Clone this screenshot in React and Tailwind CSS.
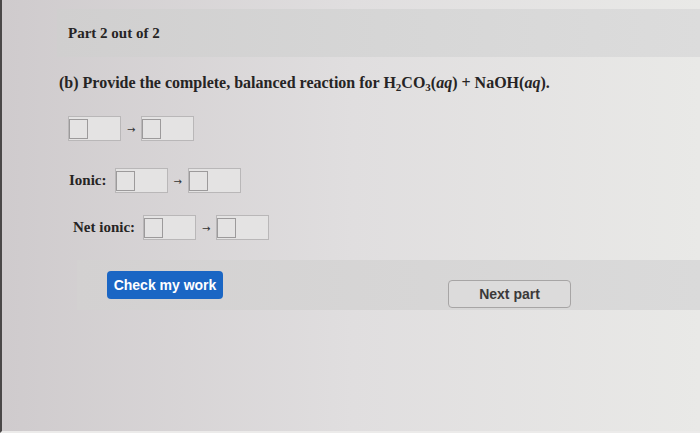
import React from "react";

const serif = { fontFamily: '"Liberation Serif", "Times New Roman", serif' };
const sans = { fontFamily: '"Liberation Sans", Arial, sans-serif' };
const arrowFont = { fontFamily: '"DejaVu Sans", sans-serif' };

function AnswerBox() {
  return (
    <div className="flex h-[25px] w-[53px] border border-[#b9b7b8] bg-[#e4e3e3]">
      <div className="mt-[2px] h-[20px] w-[19px] border border-[#9c9a9b]" />
    </div>
  );
}

function Reaction({ className = "" }) {
  return (
    <div className={"flex items-center " + className}>
      <AnswerBox />
      <span className="mx-[6px] mt-[3px] text-[10px] leading-none text-[#333]" style={arrowFont}>
        →
      </span>
      <AnswerBox />
    </div>
  );
}

export default function App() {
  return (
    <div
      className="flex h-[433px] w-[700px] flex-col overflow-hidden border-l-2 border-b-2 border-l-[#4a4848] border-b-[#ecebea] bg-gradient-to-r from-[#cfcbcd] via-[#e0dedf] to-[#e9e9e7] text-[#262424]"
      style={serif}
    >
      <div className="ml-[55px] mt-[9px] flex h-[48px] items-center bg-gradient-to-r from-[#d0cfcf] via-[#d6d6d6] to-[#dcdcdc] pl-[11px]">
        <span className="text-[15px] font-bold">Part 2 out of 2</span>
      </div>

      <p className="ml-[57px] mt-[18px] text-[16px] font-bold leading-none">
        (b) Provide the complete, balanced reaction for H
        <sub className="text-[11px]">2</sub>CO<sub className="text-[11px]">3</sub>(
        <i>aq</i>) + NaOH(<i>aq</i>).
      </p>

      <Reaction className="ml-[66px] mt-[25px]" />

      <div className="ml-[67px] mt-[27px] flex items-center">
        <span className="mr-[8px] text-[15px] font-bold">Ionic:</span>
        <Reaction />
      </div>

      <div className="ml-[71px] mt-[22px] flex items-center">
        <span className="mr-[8px] text-[15px] font-bold">Net ionic:</span>
        <Reaction />
      </div>

      <div className="ml-[75px] mt-[20px] flex h-[50px] items-center justify-between bg-gradient-to-r from-[#d3d1d1] to-[#dadada] pl-[30px] pr-[129px]">
        <button
          className="h-[28px] w-[116px] rounded-[4px] bg-[#1a66c4] text-[14px] font-bold text-white"
          style={sans}
        >
          Check my work
        </button>
        <button
          className="mt-[18px] h-[28px] w-[123px] rounded-[4px] border border-[#a7a5a5] bg-[#dcdbdb] text-[14px] font-bold text-[#3b3939]"
          style={sans}
        >
          Next part
        </button>
      </div>
    </div>
  );
}
